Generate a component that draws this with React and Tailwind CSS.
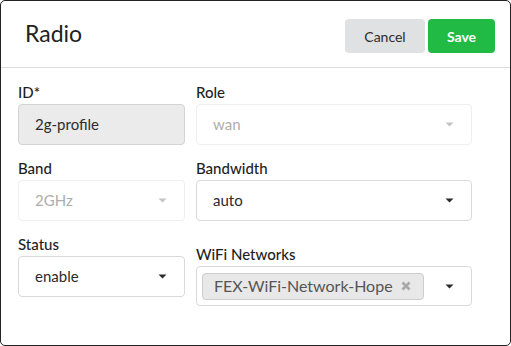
import React from "react";

const font = { fontFamily: "Lato, 'Noto Sans', sans-serif" };

function Caret({ disabled }) {
  return (
    <svg width="9" height="5" viewBox="0 0 9 5" className="shrink-0">
      <path d="M0.5 0.5 H8.5 L4.5 4.5 Z" fill={disabled ? "#c4c4c4" : "#2a2a2a"} />
    </svg>
  );
}

function Label({ children }) {
  return (
    <div className="h-[17px] mb-[3px] text-[15px] leading-[17px] font-medium text-[#1e1e1e]">
      {children}
    </div>
  );
}

function Select({ value, disabled }) {
  return (
    <div
      className={
        "h-[41px] rounded-[4px] border flex items-center justify-between pl-[16px] pr-[17px] text-[15px] " +
        (disabled ? "border-[#efefef] text-[#adadad]" : "border-[#d9d9da] text-[#2b2b2b]")
      }
    >
      <span>{value}</span>
      <Caret disabled={disabled} />
    </div>
  );
}

export default function App() {
  return (
    <div
      style={font}
      className="w-[511px] h-[346px] bg-white border border-[#222] rounded-[5px] overflow-hidden"
    >
      <div className="h-[67px] border-b border-[#dcdcdc] flex items-start justify-between pl-[24px] pr-[15px] pt-[18px]">
        <div className="text-[23px] leading-[29px] text-[#222]">Radio</div>
        <div className="flex gap-[3px]">
          <button className="w-[80px] h-[34px] rounded-[4px] bg-[#e0e1e2] text-[14px] text-[#2b2b2b]">
            Cancel
          </button>
          <button className="w-[67px] h-[34px] rounded-[4px] bg-[#21ba45] text-[14px] font-bold text-white">
            Save
          </button>
        </div>
      </div>
      <div className="pl-[17px] pt-[16px] grid grid-cols-[167px_276px] gap-x-[11px] gap-y-[15px] items-start">
        <div>
          <Label>ID*</Label>
          <div className="h-[41px] rounded-[4px] border border-[#d4d4d4] bg-[#ebebeb] flex items-center pl-[16px] text-[15px] text-[#2b2b2b]">
            2g-profile
          </div>
        </div>
        <div>
          <Label>Role</Label>
          <Select value="wan" disabled />
        </div>
        <div>
          <Label>Band</Label>
          <Select value="2GHz" disabled />
        </div>
        <div>
          <Label>Bandwidth</Label>
          <Select value="auto" />
        </div>
        <div>
          <Label>Status</Label>
          <Select value="enable" />
        </div>
        <div className="mt-[10px]">
          <Label>WiFi Networks</Label>
          <div className="h-[40px] rounded-[4px] border border-[#d9d9da] flex items-center justify-between pl-[5px] pr-[17px]">
            <div className="h-[27px] rounded-[4px] border border-[#cdcdcd] bg-[#e8e8e8] flex items-center pl-[11px] pr-[12px] gap-[8px] text-[16px] text-[#555]">
              <span>FEX-WiFi-Network-Hope</span>
              <svg width="10" height="10" viewBox="0 0 10 10">
                <path d="M1.5 1.5 L8.5 8.5 M8.5 1.5 L1.5 8.5" stroke="#a8a8a8" strokeWidth="2.6" strokeLinecap="butt" />
              </svg>
            </div>
            <Caret />
          </div>
        </div>
      </div>
    </div>
  );
}
